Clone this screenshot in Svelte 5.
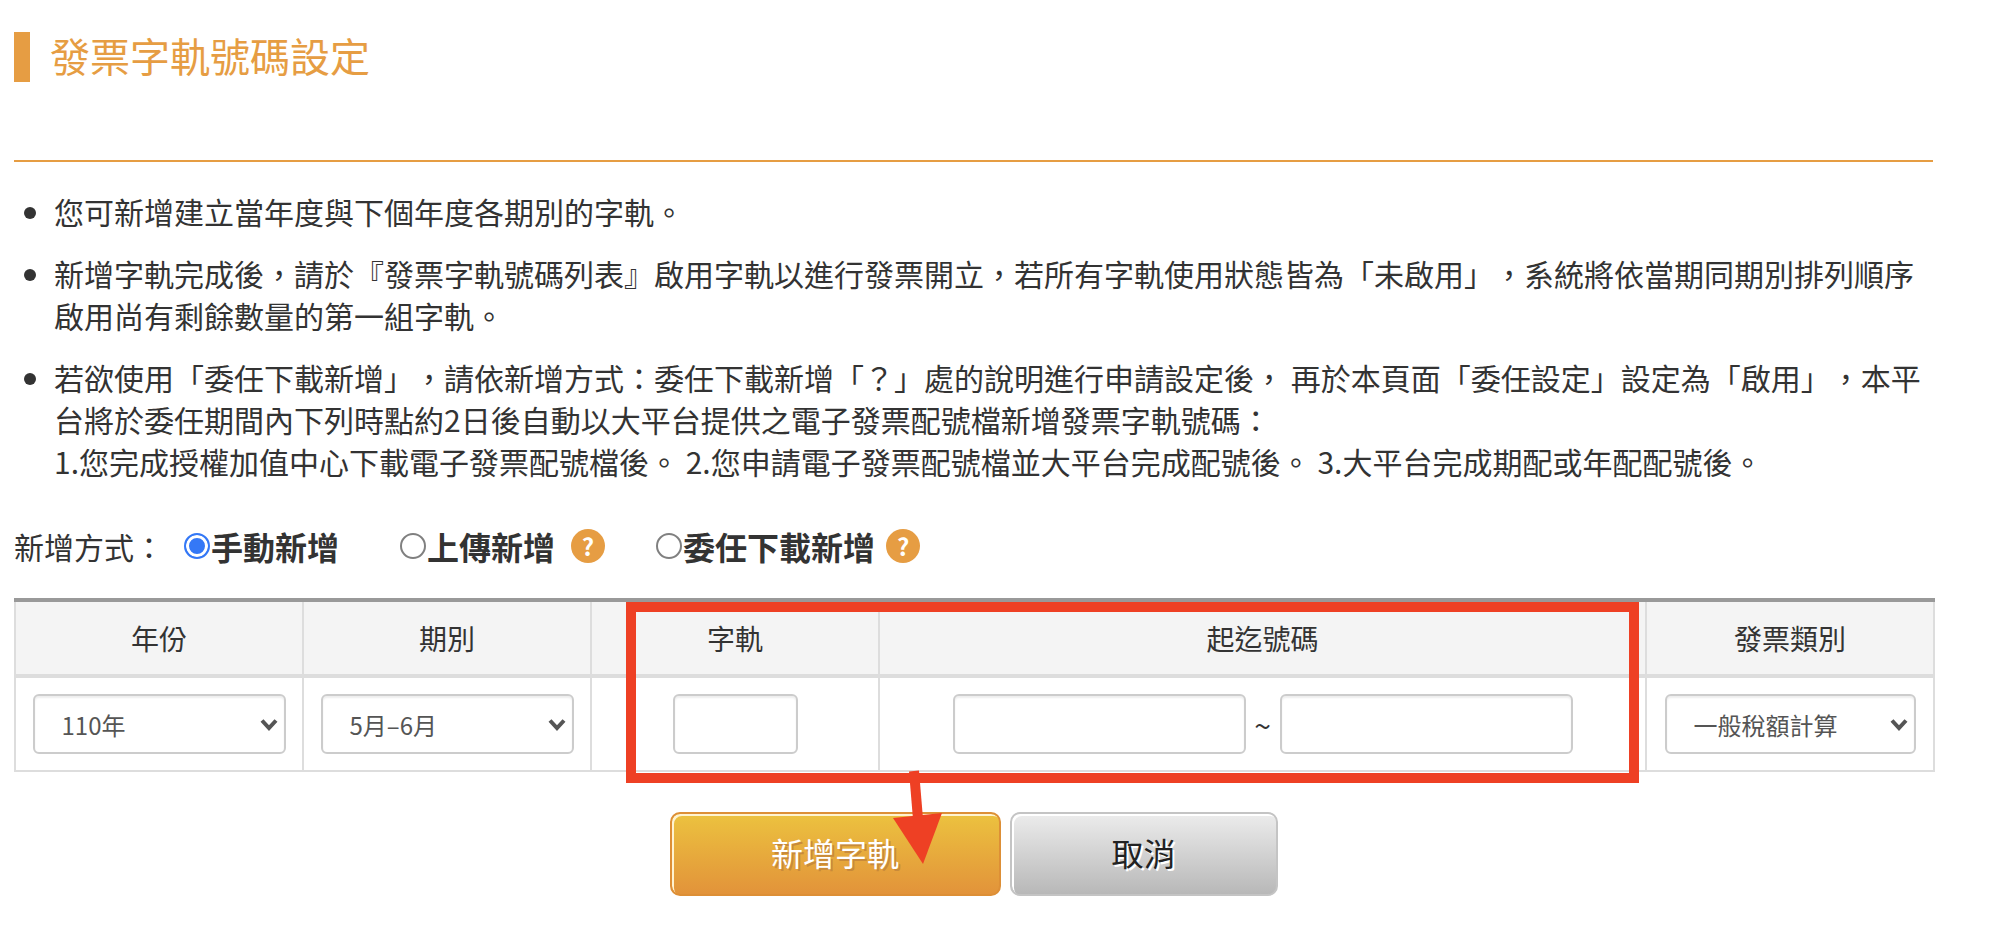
<script>
  let mode = $state('manual');
  let year = $state('110');
  let period = $state('5-6');
  let kind = $state('general');

  const notes = [
    ['您可新增建立當年度與下個年度各期別的字軌。'],
    ['新增字軌完成後，請於『發票字軌號碼列表』啟用字軌以進行發票開立，若所有字軌使用狀態皆為「未啟用」，系統將依當期同期別排列順序啟用尚有剩餘數量的第一組字軌。'],
    [
      '若欲使用「委任下載新增」，請依新增方式：委任下載新增「？」處的說明進行申請設定後， 再於本頁面「委任設定」設定為「啟用」，本平台將於委任期間內下列時點約2日後自動以大平台提供之電子發票配號檔新增發票字軌號碼：',
      '1.您完成授權加值中心下載電子發票配號檔後。 2.您申請電子發票配號檔並大平台完成配號後。 3.大平台完成期配或年配配號後。'
    ]
  ];
</script>

<main class="page">
  <h1 class="title">發票字軌號碼設定</h1>
  <hr />

  <ul class="notes">
    {#each notes as lines}
      <li>
        {#each lines as line, i}
          {#if i > 0}<br />{/if}{line}
        {/each}
      </li>
    {/each}
  </ul>

  <div class="modes">
    <span class="modes-label">新增方式：</span>
    <label class="mode first"><input type="radio" bind:group={mode} value="manual" />手動新增</label>
    <label class="mode second"><input type="radio" bind:group={mode} value="upload" />上傳新增</label>
    <span class="help upload-help">?</span>
    <label class="mode third"><input type="radio" bind:group={mode} value="agent" />委任下載新增</label>
    <span class="help">?</span>
  </div>

  <div class="form-area">
    <table>
      <colgroup>
        <col class="c-year" />
        <col class="c-period" />
        <col class="c-track" />
        <col class="c-range" />
        <col class="c-kind" />
      </colgroup>
      <thead>
        <tr>
          <th>年份</th>
          <th>期別</th>
          <th>字軌</th>
          <th>起迄號碼</th>
          <th>發票類別</th>
        </tr>
      </thead>
      <tbody>
        <tr>
          <td>
            <div class="select">
              <select bind:value={year}>
                <option value="110">110年</option>
                <option value="111">111年</option>
              </select>
              <svg viewBox="0 0 18 13" aria-hidden="true"><path d="M2 2.5 9 10l7-7.5" /></svg>
            </div>
          </td>
          <td>
            <div class="select">
              <select bind:value={period}>
                <option value="5-6">5月–6月</option>
                <option value="7-8">7月–8月</option>
              </select>
              <svg viewBox="0 0 18 13" aria-hidden="true"><path d="M2 2.5 9 10l7-7.5" /></svg>
            </div>
          </td>
          <td><input class="text track" type="text" /></td>
          <td>
            <div class="range">
              <input class="text" type="text" />
              <span class="tilde">~</span>
              <input class="text" type="text" />
            </div>
          </td>
          <td>
            <div class="select narrow">
              <select bind:value={kind}>
                <option value="general">一般稅額計算</option>
                <option value="special">特種稅額計算</option>
              </select>
              <svg viewBox="0 0 18 13" aria-hidden="true"><path d="M2 2.5 9 10l7-7.5" /></svg>
            </div>
          </td>
        </tr>
      </tbody>
    </table>

    <div class="actions">
      <button class="btn primary" type="button">新增字軌</button>
      <button class="btn cancel" type="button">取消</button>
    </div>

    <!-- annotation drawn over the form -->
    <div class="callout"></div>
    <svg class="arrow" viewBox="0 0 60 100" aria-hidden="true">
      <path class="shaft" d="M24 2 28 50" />
      <path class="head" d="M3 49 52 44 33 95Z" />
    </svg>
  </div>
</main>

<style>
  :global(body) {
    margin: 0;
    background: #fff;
  }

  .page {
    width: 1919px;
    margin-left: 14px;
    font-family: "Noto Sans CJK TC", "Noto Sans", sans-serif;
    font-size: 30px;
    line-height: 42px;
    color: #333;
    text-spacing-trim: space-all;
  }

  .title {
    margin: 0;
    padding-top: 32px;
    height: 50px;
    font-size: 40px;
    font-weight: 400;
    line-height: 46px;
    color: #e69d43;
    display: flex;
  }
  .title::before {
    content: "";
    width: 16px;
    height: 50px;
    margin-right: 20px;
    background: #e69d43;
  }

  hr {
    height: 2px;
    margin: 78px 0 0;
    border: 0;
    background: #e69d43;
  }

  .notes {
    margin: 28px 0 0;
    padding: 0 0 0 40px;
  }
  .notes li {
    margin-bottom: 20px;
  }

  .modes {
    display: flex;
    align-items: center;
    height: 42px;
    margin-top: 43px;
  }
  .mode {
    display: flex;
    align-items: center;
    font-weight: 700;
    font-size: 32px;
  }
  .first { margin-left: 20px; }
  .second { margin-left: 61px; }
  .third { margin-left: 51px; }
  .mode input {
    appearance: none;
    box-sizing: border-box;
    width: 26px;
    height: 26px;
    margin: 0 1px 0 0;
    border: 2px solid #808080;
    border-radius: 50%;
    background: #fff;
  }
  .mode input:checked {
    border-color: #3478f6;
    background: #3478f6;
    box-shadow: inset 0 0 0 3px #fff;
  }
  .help {
    width: 34px;
    height: 34px;
    margin-left: 11px;
    border-radius: 50%;
    background: #e69d43;
    color: #fff;
    font-size: 24px;
    font-weight: 700;
    line-height: 34px;
    text-align: center;
  }
  .upload-help {
    margin-left: 16px;
  }

  .form-area {
    position: relative;
    margin-top: 31px;
  }

  table {
    width: 100%;
    table-layout: fixed;
    border-collapse: collapse;
    border-top: 4px solid #999;
  }
  .c-year { width: 288px; }
  .c-period { width: 288px; }
  .c-track { width: 288px; }
  .c-range { width: 767px; }
  .c-kind { width: 288px; }
  th, td {
    padding: 0;
    border: 2px solid #ddd;
    text-align: center;
    vertical-align: middle;
  }
  thead tr:first-child th {
    border-top: 0;
  }
  th {
    height: 72px;
    border-bottom-width: 4px;
    background: #f4f4f4;
    font-size: 28px;
    font-weight: 400;
  }
  td {
    height: 92px;
  }

  .select {
    position: relative;
    width: 253px;
    height: 60px;
    margin: 0 auto;
  }
  .narrow {
    width: 251px;
  }
  .select select {
    appearance: none;
    box-sizing: border-box;
    width: 100%;
    height: 100%;
    padding: 0 40px 0 27px;
    border: 2px solid #ccc;
    border-radius: 6px;
    background: #fff;
    box-shadow: inset 0 2px 2px #eee;
    color: #555;
    font: 24px "Noto Sans CJK TC", "Noto Sans", sans-serif;
  }
  .select svg {
    position: absolute;
    top: 24px;
    right: 8px;
    width: 18px;
    height: 13px;
    pointer-events: none;
  }
  .select path {
    fill: none;
    stroke: #555;
    stroke-width: 4;
  }

  .text {
    box-sizing: border-box;
    display: block;
    width: 293px;
    height: 60px;
    padding: 0 12px;
    border: 2px solid #ccc;
    border-radius: 6px;
    background: #fff;
    box-shadow: inset 0 2px 2px #eee;
  }
  .track {
    width: 125px;
    margin: 0 auto;
  }
  .range {
    display: flex;
    align-items: center;
    justify-content: center;
  }
  .tilde {
    width: 34px;
    font-size: 30px;
    text-align: center;
  }

  .actions {
    display: flex;
    justify-content: center;
    gap: 9px;
    margin-top: 40px;
  }
  .btn {
    box-sizing: border-box;
    height: 84px;
    padding: 0 0 4px;
    border-radius: 10px;
    font: 32px "Noto Sans CJK TC", "Noto Sans", sans-serif;
  }
  .primary {
    width: 331px;
    border: 2px solid #dd8f36;
    background: linear-gradient(#ecc23f, #e2933a);
    box-shadow: inset 2px 2px 0 #fff3d0;
    color: #fff;
    text-shadow: 2px 2px 0 #c98a3a;
  }
  .cancel {
    width: 268px;
    border: 2px solid #c4c4c4;
    background: linear-gradient(#ececec, #b8b8b8);
    box-shadow: inset 2px 2px 0 #fff;
    color: #222;
    text-shadow: 2px 2px 0 #fff;
  }

  .callout {
    position: absolute;
    left: 612px;
    top: 4px;
    width: 993px;
    height: 161px;
    border: 10px solid #ee4024;
  }
  .arrow {
    position: absolute;
    left: 876px;
    top: 171px;
    width: 60px;
    height: 100px;
  }
  .shaft {
    fill: none;
    stroke: #ee4024;
    stroke-width: 10;
  }
  .head {
    fill: #ee4024;
  }
</style>
